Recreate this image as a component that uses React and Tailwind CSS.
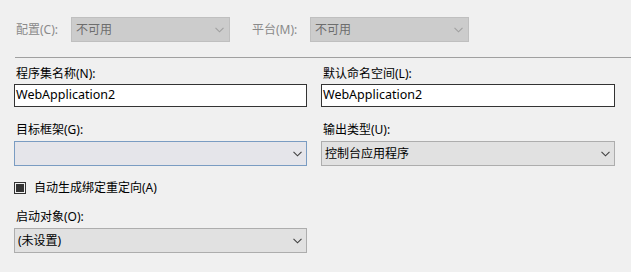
import React from 'react';

const font = { fontFamily: '"Noto Sans", "Noto Sans CJK SC", sans-serif' };

// Small down chevron used in every combo box.
const Chevron = ({ color = '#404040' }) => (
    <svg width="9" height="6" viewBox="0 0 9 6" className="shrink-0">
        <path d="M0.5 0.8 L4.5 4.8 L8.5 0.8" fill="none" stroke={color} strokeWidth="1.1" />
    </svg>
);

const Combo = ({ text, className, textClass = 'text-black', chevron }) => (
    <div className={`h-[25px] flex items-center justify-between border pl-[3px] pr-[4px] ${className}`}>
        <span className={`text-[12px] leading-none ${textClass}`}>{text}</span>
        <Chevron color={chevron} />
    </div>
);

const TextBox = ({ value }) => (
    <div className="h-[23px] flex items-center bg-white border border-[#333333] px-[1px]">
        <span className="text-[12.5px] leading-none text-black">{value}</span>
    </div>
);

const Label = ({ children, className = '' }) => (
    <div className={`text-[12px] leading-[16px] h-[16px] text-black pl-[2px] ${className}`}>{children}</div>
);

// Project properties - application tab
const App = () => (
    <div className="w-[631px] h-[272px] bg-[#f0f0f0] overflow-hidden" style={font}>
        {/* Configuration / platform row */}
        <div className="flex items-center pt-[17px] pl-[16px]">
            <span className="text-[12px] text-[#8a8a8a] w-[55px]">配置(C):</span>
            <Combo
                text="不可用"
                className="w-[159px] bg-[#cccccc] border-[#bfbfbf] pl-[4px] pr-[5px]"
                textClass="text-[#6d6d6d]"
                chevron="#a0a0a0"
            />
            <span className="text-[12px] text-[#8a8a8a] ml-[22px] w-[58px]">平台(M):</span>
            <Combo
                text="不可用"
                className="w-[159px] bg-[#cccccc] border-[#bfbfbf] pl-[4px] pr-[5px]"
                textClass="text-[#6d6d6d]"
                chevron="#a0a0a0"
            />
        </div>
        <div className="mt-[15px] ml-[15px] h-px bg-[#a0a0a0]"></div>

        {/* Main form */}
        <div className="pl-[14px] grid grid-cols-[293px_294px] gap-x-[14px]">
            <div className="flex flex-col">
                <Label className="mt-[8px]">程序集名称(N):</Label>
                <div className="mt-[2px]"><TextBox value="WebApplication2" /></div>
                <Label className="mt-[15px]">目标框架(G):</Label>
                <Combo text="" className="mt-[3px] bg-[#e5e5ea] border-[#7a9cc2]" />
            </div>
            <div className="flex flex-col">
                <Label className="mt-[8px]">默认命名空间(L):</Label>
                <div className="mt-[2px]"><TextBox value="WebApplication2" /></div>
                <Label className="mt-[15px]">输出类型(U):</Label>
                <Combo text="控制台应用程序" className="mt-[3px] bg-[#e1e1e1] border-[#adadad]" />
            </div>
        </div>

        <div className="pl-[14px] flex flex-col w-[307px]">
            <div className="mt-[14px] flex items-center h-[16px]">
                <div className="w-[12px] h-[12px] border border-[#333333] flex items-center justify-center">
                    <div className="w-[8px] h-[8px] bg-[#333333]"></div>
                </div>
                <span className="ml-[8px] text-[12px] text-black">自动生成绑定重定向(A)</span>
            </div>
            <Label className="mt-[13px]">启动对象(O):</Label>
            <Combo text="(未设置)" className="mt-[3px] bg-[#e1e1e1] border-[#adadad]" />
        </div>
    </div>
);

export default App;
